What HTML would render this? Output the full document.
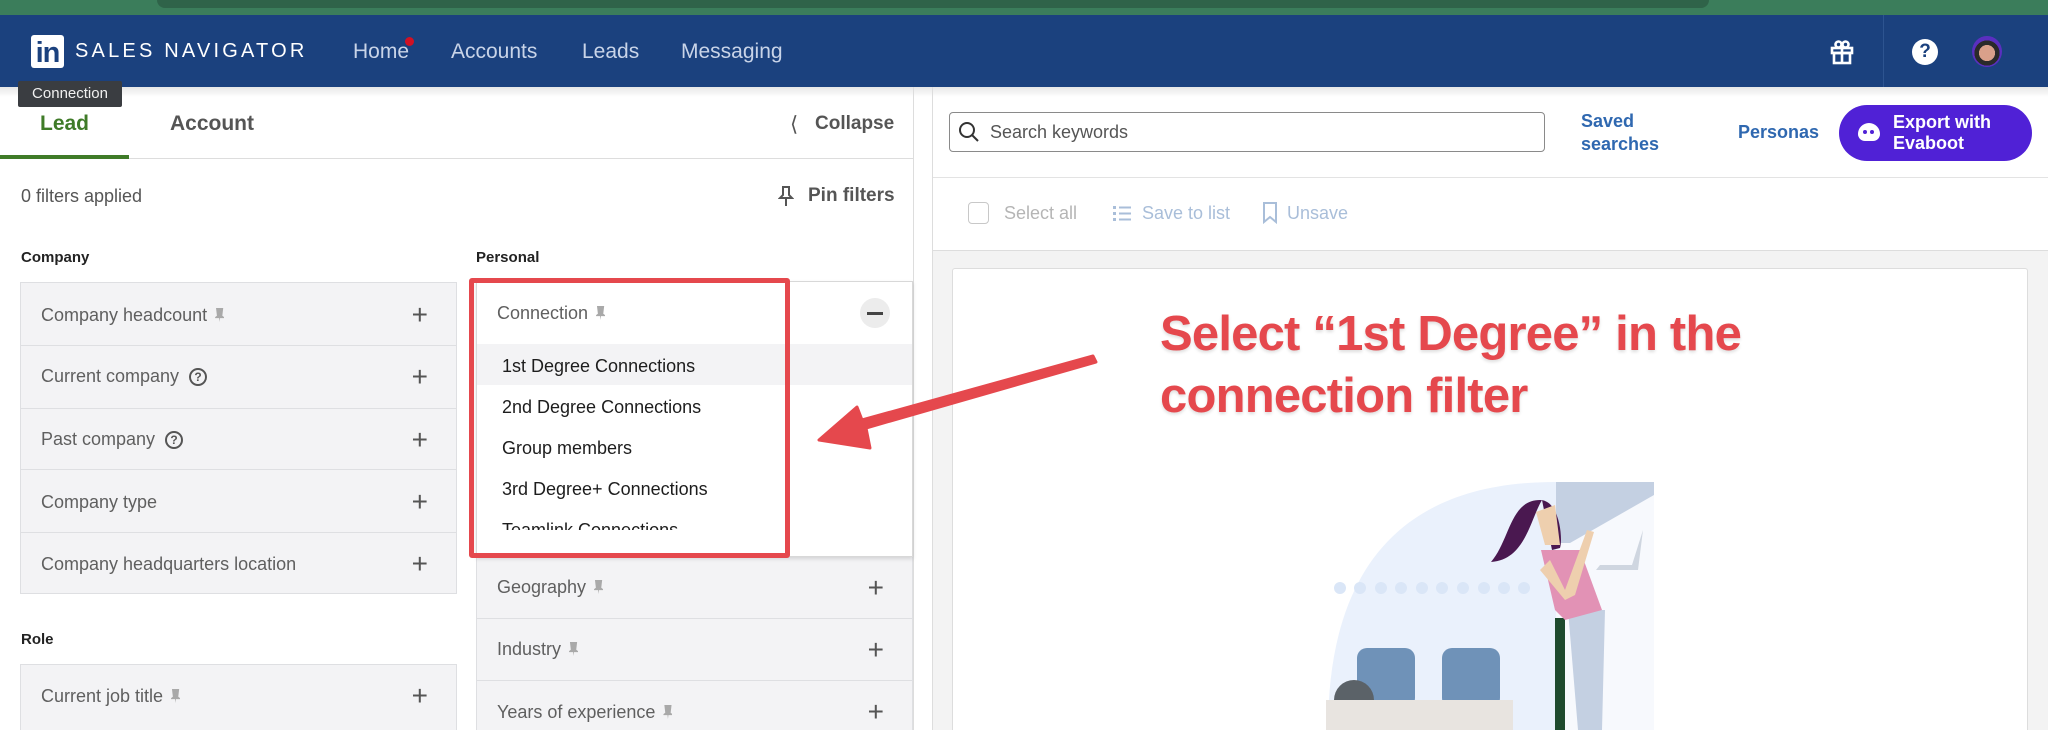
<!DOCTYPE html>
<html style="width:2048px;height:730px;overflow:hidden"><head><meta charset="utf-8"><style>
*{box-sizing:border-box;margin:0;padding:0}
body{width:2048px;height:730px;overflow:hidden;background:#fff;font-family:"Liberation Sans",Arial,sans-serif;position:relative}
.a{position:absolute}
.nav{left:0;top:15px;width:2048px;height:72px;background:#1b417e}
.navt{color:#c9d4e8;font-size:21px;top:40px}
.card{position:absolute;background:#f3f3f5;border:1px solid #dedfe2}
.row{position:absolute;left:0;right:0;border-top:1px solid #dedfe2}
.lbl{position:absolute;left:20px;color:#5f5f5f;font-size:18px}
.plus{position:absolute;right:28px;font-size:28px;color:#555;font-weight:300;line-height:1}
.pin{display:inline-block;width:9px;height:14px;background:#a9a9a9;margin-left:8px;vertical-align:-1px;clip-path:polygon(10% 0,90% 0,80% 55%,100% 65%,100% 72%,55% 72%,50% 100%,45% 72%,0 72%,0 65%,20% 55%)}
.q{display:inline-block;width:18px;height:18px;border:2px solid #555;border-radius:50%;font-size:12px;text-align:center;line-height:14px;color:#555;font-weight:bold;margin-left:10px;vertical-align:1px}
.opt{position:absolute;left:502px;font-size:18px;color:#1d1d1d}
.sec{font-size:15px;font-weight:bold;color:#222}
</style></head><body>
<div class="a" style="left:0;top:0;width:2048px;height:16px;background:#3b7d5b"></div>
<div class="a" style="left:157px;top:0;width:1552px;height:8px;background:#2f6349;border-radius:0 0 10px 10px"></div>
<div class="a nav"></div>
<div class="a" style="left:31px;top:35px;width:33px;height:33px;background:#fff;border-radius:3px;color:#1b417e;font-weight:bold;font-size:29px;line-height:36px;text-align:center;letter-spacing:-1px">in</div>
<div class="a" style="left:75px;top:40px;color:#fff;font-size:20px;letter-spacing:3.2px">SALES NAVIGATOR</div>
<div class="a navt" style="left:353px">Home</div>
<div class="a" style="left:405px;top:37px;width:9px;height:9px;border-radius:50%;background:#d11124"></div>
<div class="a navt" style="left:451px">Accounts</div>
<div class="a navt" style="left:582px">Leads</div>
<div class="a navt" style="left:681px">Messaging</div>
<svg class="a" style="left:1829px;top:39px" width="26" height="26" viewBox="0 0 26 26" fill="none" stroke="#fff" stroke-width="2.6"><rect x="3" y="9" width="20" height="5"/><rect x="5" y="14" width="16" height="10"/><line x1="13" y1="9" x2="13" y2="24"/><circle cx="9.5" cy="5.5" r="3"/><circle cx="16.5" cy="5.5" r="3"/></svg>
<div class="a" style="left:1883px;top:15px;width:1px;height:72px;background:#2d5490"></div>
<div class="a" style="left:1912px;top:39px;width:26px;height:26px;border-radius:50%;background:#fff;color:#1b417e;font-weight:bold;font-size:19px;text-align:center;line-height:26px">?</div>
<div class="a" style="left:1972px;top:36px;width:30px;height:31px;border-radius:50%;background:radial-gradient(circle at 50% 55%,#d9a08a 0 35%,#2a2a2a 36% 55%,#5a2fc0 56%)"></div>
<div class="a" style="left:0;top:87px;width:2048px;height:10px;background:linear-gradient(#00000018,#0000)"></div>
<div class="a" style="left:913px;top:87px;width:1px;height:643px;background:#ddd"></div>
<div class="a" style="left:932px;top:87px;width:1px;height:643px;background:#ddd"></div>
<div class="a" style="left:40px;top:112px;font-size:21px;color:#3f7b28;font-weight:bold">Lead</div>
<div class="a" style="left:170px;top:112px;font-size:21px;color:#555;font-weight:bold">Account</div>
<div class="a" style="left:0;top:158px;width:913px;height:1px;background:#ddd"></div>
<div class="a" style="left:0;top:155px;width:129px;height:4px;background:#3f7b28"></div>
<div class="a" style="left:790px;top:112px;font-size:21px;color:#555">&#10216;</div>
<div class="a" style="left:815px;top:113px;font-size:19px;color:#555;font-weight:bold">Collapse</div>
<div class="a" style="left:21px;top:186px;font-size:18px;color:#555">0 filters applied</div>
<svg class="a" style="left:778px;top:185px" width="16" height="22" viewBox="0 0 16 22" fill="none" stroke="#555" stroke-width="2"><path d="M4 2h8M5 2v8l-3 3h12l-3-3V2M8 13v8"/></svg>
<div class="a" style="left:808px;top:185px;font-size:19px;color:#555;font-weight:bold">Pin filters</div>
<div class="a" style="left:18px;top:81px;width:104px;height:26px;background:#3a3d41;color:#f0f0f0;font-size:15px;line-height:26px;text-align:center;border-radius:2px">Connection</div>
<div class="a sec" style="left:21px;top:249px">Company</div>
<div class="a sec" style="left:476px;top:249px">Personal</div>
<div class="card" style="left:20px;top:282px;width:437px;height:312px">
 <div class="lbl" style="top:22px">Company headcount<span class="pin"></span></div><div class="plus" style="top:18px">+</div>
 <div class="row" style="top:62px"><div class="lbl" style="top:20px">Current company<span class="q">?</span></div><div class="plus" style="top:17px">+</div></div>
 <div class="row" style="top:125px"><div class="lbl" style="top:20px">Past company<span class="q">?</span></div><div class="plus" style="top:17px">+</div></div>
 <div class="row" style="top:186px"><div class="lbl" style="top:22px">Company type</div><div class="plus" style="top:18px">+</div></div>
 <div class="row" style="top:249px"><div class="lbl" style="top:21px">Company headquarters location</div><div class="plus" style="top:17px">+</div></div>
</div>
<div class="a sec" style="left:21px;top:631px">Role</div>
<div class="card" style="left:20px;top:664px;width:437px;height:66px;border-bottom:none">
 <div class="lbl" style="top:21px">Current job title<span class="pin"></span></div><div class="plus" style="top:17px">+</div>
</div>
<div class="card" style="left:476px;top:556px;width:437px;height:174px;border-bottom:none">
 <div class="lbl" style="top:20px">Geography<span class="pin"></span></div><div class="plus" style="top:17px">+</div>
 <div class="row" style="top:61px"><div class="lbl" style="top:20px">Industry<span class="pin"></span></div><div class="plus" style="top:17px">+</div></div>
 <div class="row" style="top:123px"><div class="lbl" style="top:21px">Years of experience<span class="pin"></span></div><div class="plus" style="top:17px">+</div></div>
</div>
<div class="a" style="left:476px;top:281px;width:437px;height:276px;background:#fff;border:1px solid #d8d8d8;box-shadow:0 2px 4px #0002"></div>
<div class="a" style="left:477px;top:344px;width:435px;height:41px;background:#f3f3f5"></div>
<div class="lbl" style="left:497px;top:303px">Connection<span class="pin"></span></div>
<div class="a" style="left:860px;top:298px;width:30px;height:30px;border-radius:50%;background:#ececec"></div>
<div class="a" style="left:867px;top:312px;width:16px;height:3px;background:#444"></div>
<div class="opt" style="top:356px">1st Degree Connections</div>
<div class="opt" style="top:397px">2nd Degree Connections</div>
<div class="opt" style="top:438px">Group members</div>
<div class="opt" style="top:479px">3rd Degree+ Connections</div>
<div class="a" style="left:480px;top:518px;width:300px;height:12px;overflow:hidden"><div class="opt" style="left:22px;top:2px">Teamlink Connections</div></div>
<div class="a" style="left:469px;top:278px;width:321px;height:280px;border:5px solid #e5484d;border-radius:3px"></div>
<div class="a" style="left:949px;top:112px;width:596px;height:40px;border:1.5px solid #8a8a8a;border-radius:4px"></div>
<svg class="a" style="left:957px;top:120px" width="24" height="24" viewBox="0 0 24 24" fill="none" stroke="#333" stroke-width="2"><circle cx="10" cy="10" r="7"/><path d="M15 15l6 6"/></svg>
<div class="a" style="left:990px;top:122px;font-size:18px;color:#555">Search keywords</div>
<div class="a" style="left:1581px;top:110px;font-size:18px;color:#2f68b0;font-weight:bold;line-height:23px">Saved<br>searches</div>
<div class="a" style="left:1738px;top:122px;font-size:18px;color:#2f68b0;font-weight:bold">Personas</div>
<div class="a" style="left:1839px;top:105px;width:193px;height:56px;border-radius:28px;background:#5021d6"></div>
<div class="a" style="left:1858px;top:123px;width:22px;height:18px;border-radius:11px 11px 7px 7px;background:#fff"></div>
<div class="a" style="left:1863px;top:130px;width:4px;height:4px;border-radius:50%;background:#5021d6"></div>
<div class="a" style="left:1870px;top:130px;width:4px;height:4px;border-radius:50%;background:#5021d6"></div>
<div class="a" style="left:1893px;top:112px;font-size:18px;color:#fff;font-weight:bold;line-height:21px">Export with<br>Evaboot</div>
<div class="a" style="left:933px;top:177px;width:1115px;height:1px;background:#e3e3e3"></div>
<div class="a" style="left:968px;top:202px;width:21px;height:22px;border:1.5px solid #c8c8c8;border-radius:4px"></div>
<div class="a" style="left:1004px;top:203px;font-size:18px;color:#b5b5b5">Select all</div>
<svg class="a" style="left:1113px;top:205px" width="18" height="16" viewBox="0 0 18 16" fill="#a9bed9"><rect x="0" y="1" width="3" height="3"/><rect x="0" y="7" width="3" height="3"/><rect x="0" y="13" width="3" height="3"/><rect x="6" y="1.5" width="12" height="2"/><rect x="6" y="7.5" width="12" height="2"/><rect x="6" y="13.5" width="12" height="2"/></svg>
<div class="a" style="left:1142px;top:203px;font-size:18px;color:#a9bed9">Save to list</div>
<svg class="a" style="left:1262px;top:202px" width="16" height="22" viewBox="0 0 16 22" fill="none" stroke="#a9bed9" stroke-width="2"><path d="M2 1h12v19l-6-5-6 5z"/></svg>
<div class="a" style="left:1287px;top:203px;font-size:18px;color:#a9bed9">Unsave</div>
<div class="a" style="left:933px;top:250px;width:1115px;height:480px;background:#f3f3f3;border-top:1px solid #ddd"></div>
<div class="a" style="left:952px;top:268px;width:1076px;height:462px;background:#fff;border:1px solid #ddd;border-bottom:none;border-radius:3px 3px 0 0"></div>
<div class="a" style="left:1160px;top:303px;font-size:49px;font-weight:bold;color:#e5484d;line-height:62px;letter-spacing:-0.8px;text-shadow:0 2px 3px #0002">Select “1st Degree” in the<br>connection filter</div>
<svg class="a" style="left:0;top:0" width="2048" height="730"><path d="M1093 356 L862 420 L857 407 L819 440 L870 448 L866 428 L1096 362 Z" fill="#e5484d" stroke="#e5484d" stroke-width="3" stroke-linejoin="round"/>
<path d="M1328 730 C1328 570 1400 482 1555 482 L1654 482 L1654 730 Z" fill="#eaf1fc"/>
<rect x="1556" y="482" width="98" height="248" fill="#f7f9fd"/>
<path d="M1556 482 H1654 V495 L1570 543 H1556Z" fill="#c4d0e2"/>
<g fill="#dae6f7"><circle cx="1340" cy="588" r="6"/><circle cx="1360" cy="588" r="6"/><circle cx="1381" cy="588" r="6"/><circle cx="1401" cy="588" r="6"/><circle cx="1422" cy="588" r="6"/><circle cx="1442" cy="588" r="6"/><circle cx="1463" cy="588" r="6"/><circle cx="1484" cy="588" r="6"/><circle cx="1504" cy="588" r="6"/><circle cx="1524" cy="588" r="6"/></g>
<rect x="1357" y="648" width="58" height="60" rx="10" fill="#6f92b8"/><rect x="1442" y="648" width="58" height="60" rx="10" fill="#6f92b8"/>
<path d="M1334 700 a20 20 0 0 1 40 0z" fill="#5b6268"/>
<rect x="1326" y="700" width="187" height="30" fill="#e8e4e0"/>
<path d="M1568 610 L1605 610 L1602 730 L1578 730Z" fill="#c4d0e2"/>
<rect x="1555" y="618" width="10" height="112" fill="#1e4a2e"/>
<path d="M1541 550 L1580 550 L1602 610 L1565 620 L1555 610Z" fill="#e292b5"/>
<path d="M1542 500 C1530 520 1525 560 1491 562 C1510 540 1510 500 1540 500 C1560 500 1563 540 1560 548 L1552 550Z" fill="#4a1850"/>
<path d="M1536 512 L1555 505 L1560 545 L1545 545Z" fill="#eecfae"/>
<path d="M1550 560 L1565 590 L1587 530 L1594 532 L1575 595 L1565 600 L1540 570Z" fill="#eecfae"/>
<path d="M1643 530 L1638 570 L1596 570 L1600 565 L1632 565 Z" fill="#cfd6e0"/>
</svg>
</body></html>
